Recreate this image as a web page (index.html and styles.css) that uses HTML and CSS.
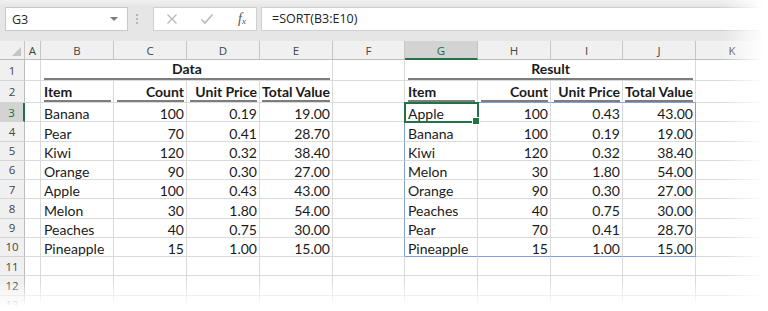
FILE: index.html
```html
<!DOCTYPE html>
<html>
<head>
<meta charset="utf-8">
<title>SORT</title>
<link rel="stylesheet" href="styles.css">
</head>
<body>
<div class="app">
  <div class="fbar">
    <div class="namebox"><span>G3</span><span class="dd"></span></div>
    <div class="grip"><i></i><i></i><i></i></div>
    <div class="fbtns">
      <svg class="ico" width="12" height="12" viewBox="0 0 12 12"><path d="M1.5 1.5 L10.5 10.5 M10.5 1.5 L1.5 10.5" stroke="#b9b9b9" stroke-width="1.3" fill="none"/></svg>
      <svg class="ico" width="14" height="12" viewBox="0 0 14 12"><path d="M1.5 6.5 L5 10 L12.5 1.5" stroke="#b9b9b9" stroke-width="1.6" fill="none"/></svg>
      <span class="fx">f<sub>x</sub></span>
    </div>
    <div class="finput">=SORT(B3:E10)</div>
  </div>

  <div class="sheet">
    <!-- column headers -->
    <div class="corner"><svg width="9" height="9" viewBox="0 0 9 9"><polygon points="9,0 9,9 0,9" fill="#c4c4c4"/></svg></div>
    <div class="ch">A</div><div class="ch">B</div><div class="ch">C</div><div class="ch">D</div><div class="ch">E</div><div class="ch">F</div><div class="ch on">G</div><div class="ch">H</div><div class="ch">I</div><div class="ch">J</div><div class="ch">K</div>

    <!-- row 1 -->
    <div class="rh">1</div><div class="c"></div>
    <div class="c m t"><span>Data</span></div>
    <div class="c"></div>
    <div class="c m t"><span>Result</span></div>
    <div class="c"></div>

    <!-- row 2 -->
    <div class="rh">2</div><div class="c"></div>
    <div class="c h"><span>Item</span></div><div class="c h r"><span>Count</span></div><div class="c h r"><span>Unit Price</span></div><div class="c h r"><span>Total Value</span></div>
    <div class="c"></div>
    <div class="c h bb"><span>Item</span></div><div class="c h r bb"><span>Count</span></div><div class="c h r bb"><span>Unit Price</span></div><div class="c h r bb"><span>Total Value</span></div>
    <div class="c"></div>

    <!-- row 3 -->
    <div class="rh on">3</div><div class="c"></div>
    <div class="c">Banana</div><div class="c r">100</div><div class="c r">0.19</div><div class="c r">19.00</div>
    <div class="c br"></div>
    <div class="c sel">Apple</div><div class="c r">100</div><div class="c r">0.43</div><div class="c r br">43.00</div>
    <div class="c"></div>

    <!-- row 4 -->
    <div class="rh">4</div><div class="c"></div>
    <div class="c">Pear</div><div class="c r">70</div><div class="c r">0.41</div><div class="c r">28.70</div>
    <div class="c br"></div>
    <div class="c">Banana</div><div class="c r">100</div><div class="c r">0.19</div><div class="c r br">19.00</div>
    <div class="c"></div>

    <!-- row 5 -->
    <div class="rh">5</div><div class="c"></div>
    <div class="c">Kiwi</div><div class="c r">120</div><div class="c r">0.32</div><div class="c r">38.40</div>
    <div class="c br"></div>
    <div class="c">Kiwi</div><div class="c r">120</div><div class="c r">0.32</div><div class="c r br">38.40</div>
    <div class="c"></div>

    <!-- row 6 -->
    <div class="rh">6</div><div class="c"></div>
    <div class="c">Orange</div><div class="c r">90</div><div class="c r">0.30</div><div class="c r">27.00</div>
    <div class="c br"></div>
    <div class="c">Melon</div><div class="c r">30</div><div class="c r">1.80</div><div class="c r br">54.00</div>
    <div class="c"></div>

    <!-- row 7 -->
    <div class="rh">7</div><div class="c"></div>
    <div class="c">Apple</div><div class="c r">100</div><div class="c r">0.43</div><div class="c r">43.00</div>
    <div class="c br"></div>
    <div class="c">Orange</div><div class="c r">90</div><div class="c r">0.30</div><div class="c r br">27.00</div>
    <div class="c"></div>

    <!-- row 8 -->
    <div class="rh">8</div><div class="c"></div>
    <div class="c">Melon</div><div class="c r">30</div><div class="c r">1.80</div><div class="c r">54.00</div>
    <div class="c br"></div>
    <div class="c">Peaches</div><div class="c r">40</div><div class="c r">0.75</div><div class="c r br">30.00</div>
    <div class="c"></div>

    <!-- row 9 -->
    <div class="rh">9</div><div class="c"></div>
    <div class="c">Peaches</div><div class="c r">40</div><div class="c r">0.75</div><div class="c r">30.00</div>
    <div class="c br"></div>
    <div class="c">Pear</div><div class="c r">70</div><div class="c r">0.41</div><div class="c r br">28.70</div>
    <div class="c"></div>

    <!-- row 10 -->
    <div class="rh">10</div><div class="c"></div>
    <div class="c">Pineapple</div><div class="c r">15</div><div class="c r">1.00</div><div class="c r">15.00</div>
    <div class="c br"></div>
    <div class="c bb">Pineapple</div><div class="c r bb">15</div><div class="c r bb">1.00</div><div class="c r br bb">15.00</div>
    <div class="c"></div>

    <!-- row 11 -->
    <div class="rh">11</div><div class="c"></div><div class="c"></div><div class="c"></div><div class="c"></div><div class="c"></div><div class="c"></div><div class="c"></div><div class="c"></div><div class="c"></div><div class="c"></div><div class="c"></div>
    <!-- row 12 -->
    <div class="rh">12</div><div class="c"></div><div class="c"></div><div class="c"></div><div class="c"></div><div class="c"></div><div class="c"></div><div class="c"></div><div class="c"></div><div class="c"></div><div class="c"></div><div class="c"></div>
    <!-- row 13 -->
    <div class="rh last">13</div><div class="c"></div><div class="c"></div><div class="c"></div><div class="c"></div><div class="c"></div><div class="c"></div><div class="c"></div><div class="c"></div><div class="c"></div><div class="c"></div><div class="c"></div>
  </div>

  <div class="fade-top"></div>
  <div class="fade-right"></div>
  <div class="fade-bottom"></div>
</div>
</body>
</html>
```

FILE: styles.css
```css
* { box-sizing: border-box; margin: 0; padding: 0; }
html, body { width: 768px; height: 311px; overflow: hidden; background: #fff; }
body { font-family: "Lato", "Liberation Sans", sans-serif; color: #222; }

.app { position: relative; width: 768px; height: 311px; overflow: hidden; }

/* formula bar */
.fbar {
  height: 41px;
  background: #e6e6e6;
  display: flex;
  align-items: flex-start;
  padding: 7px 0 0 5px;
}
.namebox {
  width: 123px; height: 24px;
  background: #fff;
  border: 1px solid #c8c8c8;
  display: flex; align-items: center; justify-content: space-between;
  padding: 0 9px 0 6px;
  font: 12.5px "Open Sans", sans-serif; color: #262626;
}
.dd {
  width: 0; height: 0;
  border-left: 4px solid transparent;
  border-right: 4px solid transparent;
  border-top: 4px solid #7c7c7c;
}
.grip {
  width: 25px; height: 24px;
  display: flex; flex-direction: column; justify-content: center;
  padding-left: 8px; gap: 2px;
}
.grip i { display: block; width: 2px; height: 2px; background: #b5b5b5; }
.fbtns {
  width: 104px; height: 24px;
  background: #fff;
  border: 1px solid #d0d0d0;
  display: flex; align-items: center;
  padding-left: 12px; gap: 22px;
}
.fx {
  font: italic 14px "Liberation Serif", serif; color: #555;
  margin-left: 2px;
}
.fx sub { font-size: 9px; vertical-align: -1px; }
.finput {
  flex: 1; height: 24px;
  margin-left: 4px;
  background: #fff;
  border: 1px solid #d0d0d0;
  padding-left: 10px;
  font: 12.5px/22px "Open Sans", sans-serif; color: #222;
}

/* sheet */
.sheet {
  display: grid;
  grid-template-columns: 25px 16px 73px 73px 73px 73px 72px 73px 73px 72px 73px 73px;
  grid-template-rows: 19px 21px 22px repeat(11, 19.25px);
  width: 769px;
}
.corner, .ch {
  background: #f0f0f0;
  border-right: 1px solid #c6c6c6;
  border-bottom: 1px solid #bdbdbd;
}
.corner { display: flex; align-items: flex-end; justify-content: flex-end; padding: 0 3px 3px 0; }
.ch {
  display: flex; align-items: center; justify-content: center;
  font: 11.5px "Open Sans", sans-serif; color: #444;
  padding-top: 1px;
}
.ch.on { background: #d3d3d3; border-bottom: 2px solid #217346; color: #1d6a40; padding-top: 2px; }
.rh {
  background: #f0f0f0;
  border-right: 1px solid #bdbdbd;
  border-bottom: 1px solid #d4d4d4;
  display: flex; align-items: center; justify-content: center;
  font: 11.5px "Open Sans", sans-serif; color: #444;
}
.rh.on { background: #d3d3d3; border-right: 2px solid #217346; color: #1d6a40; }
.rh.last { align-items: flex-start; padding-top: 1px; }

.c {
  border-right: 1px solid #dadada;
  border-bottom: 1px solid #dadada;
  display: flex; align-items: flex-end;
  padding: 0 2px 0 3px;
  font-size: 14px; line-height: 15px; color: #1a1a1a;
  white-space: nowrap;
}
.c.r { justify-content: flex-end; }
.c.m { grid-column: span 4; }
.c.t, .c.h { font-weight: 700; }
.c.t > span, .c.h > span {
  flex: 1;
  border-bottom: 2px solid #7d7d7d;
  padding-bottom: 1px;
}
.c.t > span { text-align: center; padding-bottom: 2px; }
.c.r > span { text-align: right; }

.c.br { border-right-color: #7fa0d8; }
.c.bb { border-bottom-color: #7fa0d8; }

.c.sel {
  position: relative; z-index: 2;
  outline: 2px solid #217346;
  outline-offset: -1px;
}
.c.sel::after {
  content: "";
  position: absolute;
  right: -3px; bottom: -4px;
  width: 6px; height: 6px;
  background: #217346;
  border: 1px solid #fff;
}

/* soft edges of the screenshot */
.fade-top {
  position: absolute; left: 0; top: 0; right: 0; height: 6px;
  background: linear-gradient(to bottom, rgba(255,255,255,0.45), rgba(255,255,255,0));
}
.fade-right {
  position: absolute; top: 0; right: 0; bottom: 0; width: 46px;
  background: linear-gradient(to right, rgba(255,255,255,0), #fff 90%);
  z-index: 5;
}
.fade-bottom {
  position: absolute; left: 0; right: 0; bottom: 0; height: 30px;
  background: linear-gradient(to bottom, rgba(255,255,255,0), #fff 85%);
  z-index: 5;
}
```
